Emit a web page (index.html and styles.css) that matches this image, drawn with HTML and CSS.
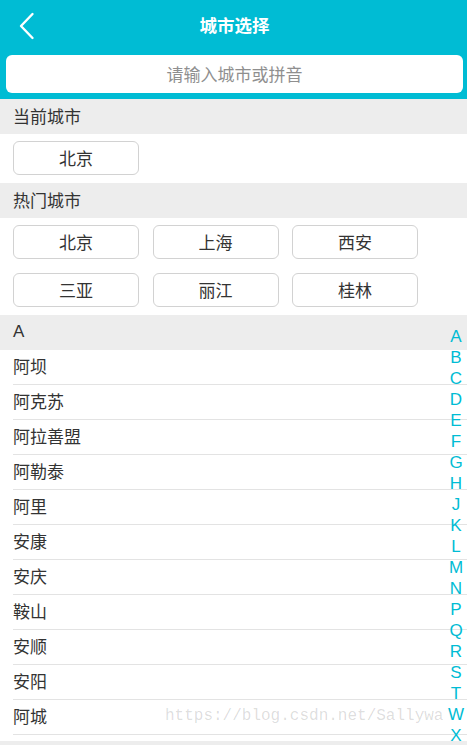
FILE: index.html
```html
<!DOCTYPE html>
<html lang="zh-CN">
<head>
<meta charset="utf-8">
<title>城市选择</title>
<link rel="stylesheet" href="styles.css">
</head>
<body>
<div class="page">
  <header class="header">
    <div class="topbar">
      <span class="back">
        <svg width="16" height="28" viewBox="0 0 16 28"><polyline points="13.5,2 2,14 13.5,26" fill="none" stroke="#fff" stroke-width="2.4" stroke-linecap="round" stroke-linejoin="round"/></svg>
      </span>
      <h1 class="title">城市选择</h1>
    </div>
    <div class="search">请输入城市或拼音</div>
  </header>

  <div class="sec-title">当前城市</div>
  <div class="btn-area">
    <div class="btn-grid">
      <span class="city-btn">北京</span>
    </div>
  </div>

  <div class="sec-title">热门城市</div>
  <div class="btn-area">
    <div class="btn-grid">
      <span class="city-btn">北京</span>
      <span class="city-btn">上海</span>
      <span class="city-btn">西安</span>
      <span class="city-btn">三亚</span>
      <span class="city-btn">丽江</span>
      <span class="city-btn">桂林</span>
    </div>
  </div>

  <div class="sec-title">A</div>
  <ul class="city-list">
    <li>阿坝</li>
    <li>阿克苏</li>
    <li>阿拉善盟</li>
    <li>阿勒泰</li>
    <li>阿里</li>
    <li>安康</li>
    <li>安庆</li>
    <li>鞍山</li>
    <li>安顺</li>
    <li>安阳</li>
    <li>阿城</li>
  </ul>
  <div class="sec-title"></div>

  <ul class="index-bar">
    <li>A</li><li>B</li><li>C</li><li>D</li><li>E</li><li>F</li><li>G</li><li>H</li><li>J</li><li>K</li>
    <li>L</li><li>M</li><li>N</li><li>P</li><li>Q</li><li>R</li><li>S</li><li>T</li><li>W</li><li>X</li>
  </ul>
  <div class="watermark">https://blog.csdn.net/Sallywa</div>
</div>
</body>
</html>
```

FILE: styles.css
```css
* { box-sizing: border-box; }
html, body {
  margin: 0;
  padding: 0;
  background: #fff;
  height: 745px;
  overflow: hidden;
}
body {
  font-family: "Liberation Sans", "Noto Sans CJK SC", sans-serif;
  color: #333;
  font-size: 17px;
}
.page {
  position: relative;
  width: 467px;
  height: 745px;
  overflow: hidden;
}
.header {
  background: #00bcd4;
  padding: 0 4px 6px 6px;
}
.topbar {
  height: 55px;
  display: flex;
  align-items: center;
  justify-content: center;
  position: relative;
}
.back {
  position: absolute;
  left: 13px;
  top: 12px;
  display: flex;
}
.title {
  margin: 0 0 2px;
  color: #fff;
  font-size: 17.5px;
  font-weight: bold;
  line-height: 1;
}
.search {
  height: 38px;
  background: #fff;
  border-radius: 6px;
  display: flex;
  align-items: center;
  justify-content: center;
  color: #8f8f8f;
  font-size: 17px;
  padding-bottom: 1px;
}
.sec-title {
  height: 35px;
  background: #ededed;
  display: flex;
  align-items: center;
  padding-left: 13px;
  padding-bottom: 2px;
  color: #333;
  font-size: 17px;
}
.btn-area {
  padding: 7px 0 8px 13px;
}
.btn-grid {
  display: grid;
  grid-template-columns: repeat(3, 126px);
  column-gap: 13.5px;
  row-gap: 14px;
}
.city-btn {
  height: 34px;
  border: 1px solid #d2d2d2;
  border-radius: 6px;
  display: flex;
  align-items: center;
  justify-content: center;
  padding-bottom: 1px;
  color: #333;
  font-size: 17px;
  background: #fff;
}
.city-list {
  list-style: none;
  margin: 0 0 6px;
  padding: 0 0 0 13px;
}
.city-list li {
  height: 35px;
  border-bottom: 1px solid #e3e3e3;
  display: flex;
  align-items: center;
  padding-bottom: 3px;
  color: #333;
  font-size: 17px;
}
.index-bar {
  position: absolute;
  right: 0;
  top: 326px;
  width: 22px;
  margin: 0;
  padding: 0;
  list-style: none;
}
.index-bar li {
  height: 21px;
  line-height: 21px;
  text-align: center;
  color: #00bcd4;
  font-size: 17px;
  font-family: "Liberation Sans", sans-serif;
}
.watermark {
  position: absolute;
  left: 165px;
  top: 707px;
  font-family: "Liberation Mono", monospace;
  font-size: 16px;
  color: rgba(0, 0, 0, 0.14);
  white-space: nowrap;
}
```
